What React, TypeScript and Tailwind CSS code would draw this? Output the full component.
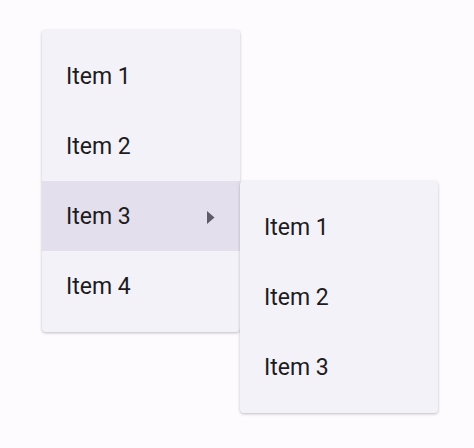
import React from 'react';

const MenuItem: React.FC<{label: string; active?: boolean; hasSub?: boolean}> = ({label, active, hasSub}) => (
    <div className={`flex h-[70px] items-center justify-between px-6 pt-[2px] ${active ? 'bg-[#e3dfec]' : ''}`}>
        <span className="text-[23px] text-[#1d1b20]">{label}</span>
        {hasSub && (
            <svg width="8" height="13" viewBox="0 0 8 13" className="mr-[1px]">
                <path d="M0 0 L7.5 6.5 L0 13 Z" fill="#5f5b66"/>
            </svg>
        )}
    </div>
);

const App: React.FC = () => {
    return (
        <div className="h-[448px] w-[474px] bg-[#fefbfe]" style={{fontFamily: 'Roboto, sans-serif'}}>
            <div className="flex items-start pl-[42px] pt-[30px]">
                <div className="w-[198px] rounded-[4px] bg-[#f3f2f8] py-[11px] shadow-[0_1px_3px_rgba(0,0,0,0.25)]">
                    <MenuItem label="Item 1"/>
                    <MenuItem label="Item 2"/>
                    <MenuItem label="Item 3" active hasSub/>
                    <MenuItem label="Item 4"/>
                </div>
                <div className="mt-[151px] w-[198px] rounded-[4px] bg-[#f3f2f8] py-[11px] shadow-[0_1px_3px_rgba(0,0,0,0.25)]">
                    <MenuItem label="Item 1"/>
                    <MenuItem label="Item 2"/>
                    <MenuItem label="Item 3"/>
                </div>
            </div>
        </div>
    );
};

export default App;
